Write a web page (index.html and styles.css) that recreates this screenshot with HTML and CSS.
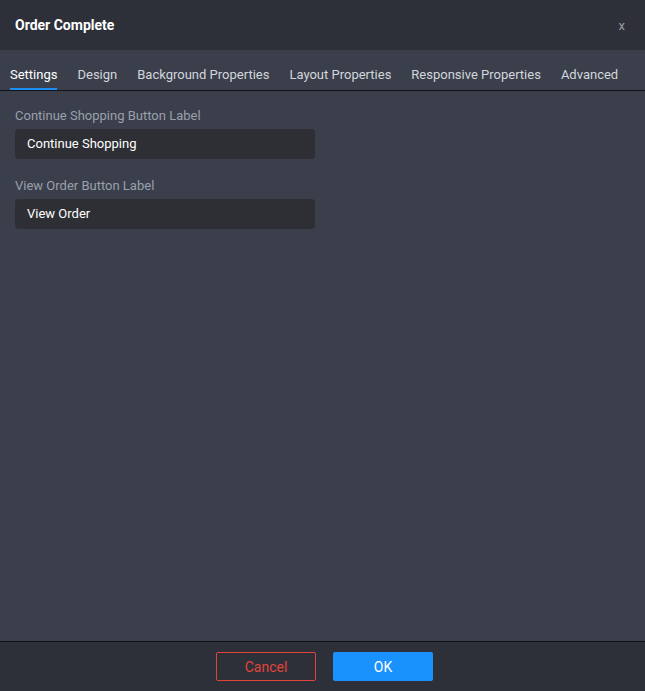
FILE: index.html
```html
<!DOCTYPE html>
<html>
<head>
<meta charset="utf-8">
<link rel="stylesheet" href="styles.css">
</head>
<body>
<div class="dialog">
  <div class="header">
    <div class="title">Order Complete</div>
    <div class="close">x</div>
  </div>
  <div class="tabs">
    <div class="tab active">Settings</div>
    <div class="tab">Design</div>
    <div class="tab">Background Properties</div>
    <div class="tab">Layout Properties</div>
    <div class="tab">Responsive Properties</div>
    <div class="tab">Advanced</div>
  </div>
  <div class="content">
    <div class="field">
      <div class="label">Continue Shopping Button Label</div>
      <div class="input">Continue Shopping</div>
    </div>
    <div class="field">
      <div class="label">View Order Button Label</div>
      <div class="input">View Order</div>
    </div>
  </div>
  <div class="footer">
    <div class="btn cancel">Cancel</div>
    <div class="btn ok">OK</div>
  </div>
</div>
</body>
</html>
```
FILE: styles.css
```css
html, body { margin: 0; padding: 0; }
body { font-family: Roboto, "Liberation Sans", sans-serif; font-size: 13px; background: #3a3f4b; }
.dialog { width: 645px; height: 691px; display: flex; flex-direction: column; background: #3a3f4b; }
.header { height: 50px; background: #2e3039; display: flex; align-items: center; justify-content: space-between; padding: 0 20px 0 15px; box-sizing: border-box; }
.title { color: #ffffff; font-weight: bold; font-size: 14px; }
.close { color: #9a9ca5; font-size: 13px; }
.tabs { height: 41px; display: flex; align-items: stretch; padding-left: 10px; gap: 20px; border-bottom: 1px solid #111318; box-sizing: border-box; }
.tab { color: #d4d6dc; display: flex; align-items: center; padding-top: 10px; box-sizing: border-box; border-bottom: 2px solid transparent; }
.tab.active { color: #ffffff; border-bottom-color: #1c90f5; }
.content { flex: 1; padding: 17px 15px 0; display: flex; flex-direction: column; gap: 19px; }
.field { display: flex; flex-direction: column; gap: 5px; width: 300px; }
.label { color: #9aa0ab; line-height: 16px; }
.input { height: 30px; background: #2d2f34; border-radius: 4px; color: #ffffff; display: flex; align-items: center; padding: 0 12px 1px; box-sizing: border-box; }
.footer { height: 50px; background: #2e3039; border-top: 1px solid #0f1014; display: flex; justify-content: center; align-items: center; gap: 17px; padding-left: 4px; box-sizing: border-box; }
.btn { width: 100px; height: 29px; box-sizing: border-box; display: flex; align-items: center; justify-content: center; font-size: 14px; border-radius: 2px; }
.cancel { border: 1px solid #e0443a; color: #e0443a; }
.ok { background: #1a92fd; color: #ffffff; }
```
